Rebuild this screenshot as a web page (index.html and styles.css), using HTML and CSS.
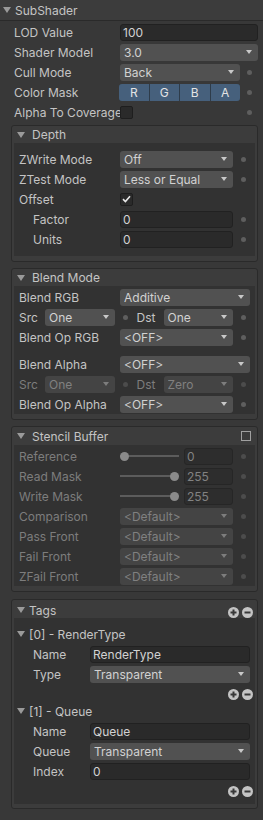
FILE: index.html
```html
<!DOCTYPE html>
<html>
<head>
<meta charset="utf-8">
<link rel="stylesheet" href="styles.css">
</head>
<body>
<div class="inspector">
  <div class="fold-head"><svg class="tri" width="8" height="6" viewBox="0 0 8 6"><path d="M0 0h8L4 6z"/></svg><span>SubShader</span></div>
  <div class="top">
    <div class="row"><span class="lbl">LOD Value</span><div class="tf">100</div></div>
    <div class="row"><span class="lbl">Shader Model</span><div class="dd"><span class="t">3.0</span><i class="arr"></i></div></div>
    <div class="row"><span class="lbl">Cull Mode</span><div class="dd"><span class="t">Back</span><i class="arr"></i></div><span class="slot"><i class="dot"></i></span></div>
    <div class="row"><span class="lbl">Color Mask</span><div class="mask"><span>R</span><span>G</span><span>B</span><span>A</span></div><span class="slot"><i class="dot"></i></span></div>
    <div class="row"><span class="lbl">Alpha To Coverage</span><div class="fill"><span class="cb"></span></div><span class="slot"><i class="dot"></i></span></div>
  </div>

  <section class="box">
    <div class="box-head"><svg class="tri" width="8" height="6" viewBox="0 0 8 6"><path d="M0 0h8L4 6z"/></svg><span>Depth</span></div>
    <div class="inner depth">
      <div class="row"><span class="lbl">ZWrite Mode</span><div class="dd"><span class="t">Off</span><i class="arr"></i></div><span class="slot"><i class="dot"></i></span></div>
      <div class="row"><span class="lbl">ZTest Mode</span><div class="dd"><span class="t">Less or Equal</span><i class="arr"></i></div><span class="slot"><i class="dot"></i></span></div>
      <div class="row"><span class="lbl">Offset</span><div class="fill"><span class="cb on"><svg width="9" height="8" viewBox="0 0 9 8"><path d="M1 4.2l2.4 2.3L8 1.2" fill="none" stroke="#e8e8e8" stroke-width="1.6"/></svg></span></div></div>
      <div class="row"><span class="lbl sub">Factor</span><div class="tf">0</div><span class="slot"><i class="dot"></i></span></div>
      <div class="row"><span class="lbl sub">Units</span><div class="tf">0</div><span class="slot"><i class="dot"></i></span></div>
    </div>
  </section>

  <section class="box">
    <div class="box-head"><svg class="tri" width="8" height="6" viewBox="0 0 8 6"><path d="M0 0h8L4 6z"/></svg><span>Blend Mode</span></div>
    <div class="inner blend">
      <div class="row"><span class="lbl">Blend RGB</span><div class="dd"><span class="t">Additive</span><i class="arr"></i></div></div>
      <div class="row"><span class="lbl-s">Src</span><div class="dd"><span class="t">One</span><i class="arr"></i></div><span class="slot mid"><i class="dot"></i></span><span class="lbl-d">Dst</span><div class="dd"><span class="t">One</span><i class="arr"></i></div><span class="slot"><i class="dot"></i></span></div>
      <div class="row"><span class="lbl">Blend Op RGB</span><div class="dd"><span class="t">&lt;OFF&gt;</span><i class="arr"></i></div><span class="slot"><i class="dot"></i></span></div>
      <div class="spacer"></div>
      <div class="row"><span class="lbl">Blend Alpha</span><div class="dd"><span class="t">&lt;OFF&gt;</span><i class="arr"></i></div></div>
      <div class="row off"><span class="lbl-s">Src</span><div class="dd"><span class="t">One</span><i class="arr"></i></div><span class="slot mid"><i class="dot"></i></span><span class="lbl-d">Dst</span><div class="dd"><span class="t">Zero</span><i class="arr"></i></div><span class="slot"><i class="dot"></i></span></div>
      <div class="row"><span class="lbl">Blend Op Alpha</span><div class="dd"><span class="t">&lt;OFF&gt;</span><i class="arr"></i></div><span class="slot"><i class="dot"></i></span></div>
    </div>
  </section>

  <section class="box">
    <div class="box-head stencil-head"><svg class="tri" width="8" height="6" viewBox="0 0 8 6"><path d="M0 0h8L4 6z"/></svg><span>Stencil Buffer</span><span class="hcb"></span></div>
    <div class="inner stencil">
      <div class="row off"><span class="lbl">Reference</span><div class="slider"><span class="thumb"></span></div><div class="tf num">0</div><span class="slot"><i class="dot"></i></span></div>
      <div class="row off"><span class="lbl">Read Mask</span><div class="slider"><span class="thumb max"></span></div><div class="tf num">255</div><span class="slot"><i class="dot"></i></span></div>
      <div class="row off"><span class="lbl">Write Mask</span><div class="slider"><span class="thumb max"></span></div><div class="tf num">255</div><span class="slot"><i class="dot"></i></span></div>
      <div class="row off"><span class="lbl">Comparison</span><div class="dd"><span class="t">&lt;Default&gt;</span><i class="arr"></i></div><span class="slot"><i class="dot"></i></span></div>
      <div class="row off"><span class="lbl">Pass Front</span><div class="dd"><span class="t">&lt;Default&gt;</span><i class="arr"></i></div><span class="slot"><i class="dot"></i></span></div>
      <div class="row off"><span class="lbl">Fail Front</span><div class="dd"><span class="t">&lt;Default&gt;</span><i class="arr"></i></div><span class="slot"><i class="dot"></i></span></div>
      <div class="row off"><span class="lbl">ZFail Front</span><div class="dd"><span class="t">&lt;Default&gt;</span><i class="arr"></i></div><span class="slot"><i class="dot"></i></span></div>
    </div>
  </section>

  <section class="box tags">
    <div class="box-head tags-head"><svg class="tri" width="8" height="6" viewBox="0 0 8 6"><path d="M0 0h8L4 6z"/></svg><span>Tags</span>
      <span class="pm"><svg width="11" height="11" viewBox="0 0 11 11"><circle cx="5.5" cy="5.5" r="5.5" fill="#c4c4c4"/><path d="M2.5 5.5h6M5.5 2.5v6" stroke="#383838" stroke-width="2"/></svg><svg width="11" height="11" viewBox="0 0 11 11"><circle cx="5.5" cy="5.5" r="5.5" fill="#c4c4c4"/><path d="M2.5 5.5h6" stroke="#383838" stroke-width="2"/></svg></span>
    </div>
    <div class="inner tag-list">
      <div class="el-head"><svg class="tri" width="8" height="6" viewBox="0 0 8 6"><path d="M0 0h8L4 6z"/></svg><span>[0] - RenderType</span></div>
      <div class="row el"><span class="lbl">Name</span><div class="tf">RenderType</div></div>
      <div class="row el"><span class="lbl">Type</span><div class="dd"><span class="t">Transparent</span><i class="arr"></i></div></div>
      <div class="pm-row"><span class="pm"><svg width="11" height="11" viewBox="0 0 11 11"><circle cx="5.5" cy="5.5" r="5.5" fill="#c4c4c4"/><path d="M2.5 5.5h6M5.5 2.5v6" stroke="#383838" stroke-width="2"/></svg><svg width="11" height="11" viewBox="0 0 11 11"><circle cx="5.5" cy="5.5" r="5.5" fill="#c4c4c4"/><path d="M2.5 5.5h6" stroke="#383838" stroke-width="2"/></svg></span></div>
      <div class="el-head"><svg class="tri" width="8" height="6" viewBox="0 0 8 6"><path d="M0 0h8L4 6z"/></svg><span>[1] - Queue</span></div>
      <div class="row el"><span class="lbl">Name</span><div class="tf">Queue</div></div>
      <div class="row el"><span class="lbl">Queue</span><div class="dd"><span class="t">Transparent</span><i class="arr"></i></div></div>
      <div class="row el"><span class="lbl">Index</span><div class="tf">0</div></div>
      <div class="pm-row"><span class="pm"><svg width="11" height="11" viewBox="0 0 11 11"><circle cx="5.5" cy="5.5" r="5.5" fill="#c4c4c4"/><path d="M2.5 5.5h6M5.5 2.5v6" stroke="#383838" stroke-width="2"/></svg><svg width="11" height="11" viewBox="0 0 11 11"><circle cx="5.5" cy="5.5" r="5.5" fill="#c4c4c4"/><path d="M2.5 5.5h6" stroke="#383838" stroke-width="2"/></svg></span></div>
    </div>
  </section>
</div>
</body>
</html>
```

FILE: styles.css
```css
* { box-sizing: border-box; margin: 0; padding: 0; }
html, body { background: #383838; }
body {
  margin: 0;
  width: 263px;
  height: 820px;
  overflow: hidden;
  font-family: Inter, "Noto Sans", sans-serif;
  font-size: 12px;
  color: #c4c4c4;
}
.tri { fill: #9a9a9a; flex: none; }

.fold-head {
  height: 21px;
  display: flex;
  align-items: center;
  background: #3c3c3c;
  border-bottom: 1px solid #2a2a2a;
  padding-left: 3px;
}
.fold-head .tri { margin-right: 4px; }

.top { padding: 1px 5px 0 14px; }

.row { height: 20px; display: flex; align-items: center; }
.lbl { width: 106px; flex: none; white-space: nowrap; overflow: hidden; }
.inner .lbl { width: 101px; }
.lbl.sub { padding-left: 14px; }

.tf {
  flex: 1;
  min-width: 0;
  height: 17px;
  background: #2a2a2a;
  border: 1px solid #212121;
  border-radius: 3px;
  padding-left: 2px;
  display: flex;
  align-items: center;
  color: #d2d2d2;
}
.dd {
  flex: 1;
  min-width: 0;
  height: 17px;
  background: #515151;
  border-radius: 3px;
  padding: 0 6px 0 4px;
  display: flex;
  align-items: center;
  color: #d2d2d2;
}
.dd .t { flex: 1; white-space: nowrap; overflow: hidden; }
.arr {
  flex: none;
  width: 0;
  height: 0;
  border-left: 3.5px solid transparent;
  border-right: 3.5px solid transparent;
  border-top: 4px solid #c8c8c8;
}
.slot { width: 18px; flex: none; display: flex; justify-content: center; }
.inner .slot { width: 17px; padding-left: 3px; }
.inner .slot.mid { width: 22px; padding-left: 0; }
.dot { width: 5px; height: 5px; border-radius: 50%; background: #5e5e5e; display: block; }

.fill { flex: 1; display: flex; align-items: center; }
.cb {
  width: 13px;
  height: 13px;
  border-radius: 2px;
  background: #2a2a2a;
  border: 1px solid #1e1e1e;
  display: flex;
  align-items: center;
  justify-content: center;
}

.mask {
  flex: 1;
  height: 17px;
  margin-left: -1px;
  display: flex;
  gap: 1px;
  background: #2e3c4a;
  border-radius: 3px;
  overflow: hidden;
}
.mask span {
  flex: 1;
  background: #46607c;
  display: flex;
  align-items: center;
  justify-content: center;
  color: #e4e4e4;
}

.box {
  margin: 3px 5px 6px 11px;
  background: #3c3c3c;
  border: 1px solid #2a2a2a;
  border-radius: 3px;
  padding: 0 2px 5px;
}
.box-head {
  height: 17px;
  display: flex;
  align-items: center;
  padding-left: 3px;
}
.box-head .tri { margin-right: 7px; }
.stencil-head { height: 18px; }
.hcb {
  margin-left: auto;
  margin-right: 4px;
  width: 10px;
  height: 10px;
  border: 1px solid #a0a0a0;
}
.inner { background: #323232; padding: 1px 5px 0; }
.inner.depth { padding-top: 6px; padding-bottom: 7px; }
.inner.stencil { padding-top: 1px; }
.spacer { height: 7px; }

.lbl-s { width: 26px; flex: none; }
.lbl-d { width: 27px; flex: none; }

.row.off, .row.off .lbl, .row.off .lbl-s, .row.off .lbl-d { color: #7d7d7d; }
.row.off .dd { background: #444444; color: #808080; }
.row.off .arr { border-top-color: #7d7d7d; }
.row.off .tf { background: #2d2d2d; border-color: #262626; color: #828282; }
.row.off .dot { background: #4c4c4c; }

.slider {
  width: 59px;
  flex: none;
  height: 10px;
  display: flex;
  align-items: center;
  background: linear-gradient(#5c5c5c, #5c5c5c) center / 100% 2px no-repeat;
}
.thumb { width: 9px; height: 9px; border-radius: 50%; background: #8a8a8a; }
.thumb.max { margin-left: auto; }
.tf.num { margin-left: 5px; flex: none; width: 49px; }

.box.tags { margin-top: 7px; padding-bottom: 4px; }
.tags-head { height: 18px; padding-top: 2px; }
.tags-head .tri { margin-right: 4px; }
.tags-head .pm { margin-left: auto; margin-right: 2px; align-self: flex-end; }
.pm { display: flex; gap: 3px; }
.pm svg { display: block; }
.inner.tag-list { padding: 6px 0 6px; }
.el-head { height: 20px; display: flex; align-items: center; padding-left: 3px; }
.el-head .tri { margin-right: 4px; }
.row.el { padding: 0 5px 0 19px; }
.row.el .lbl { width: 57px; }
.pm-row { height: 17px; display: flex; justify-content: flex-end; align-items: flex-start; padding: 5px 2px 0 0; }
```
